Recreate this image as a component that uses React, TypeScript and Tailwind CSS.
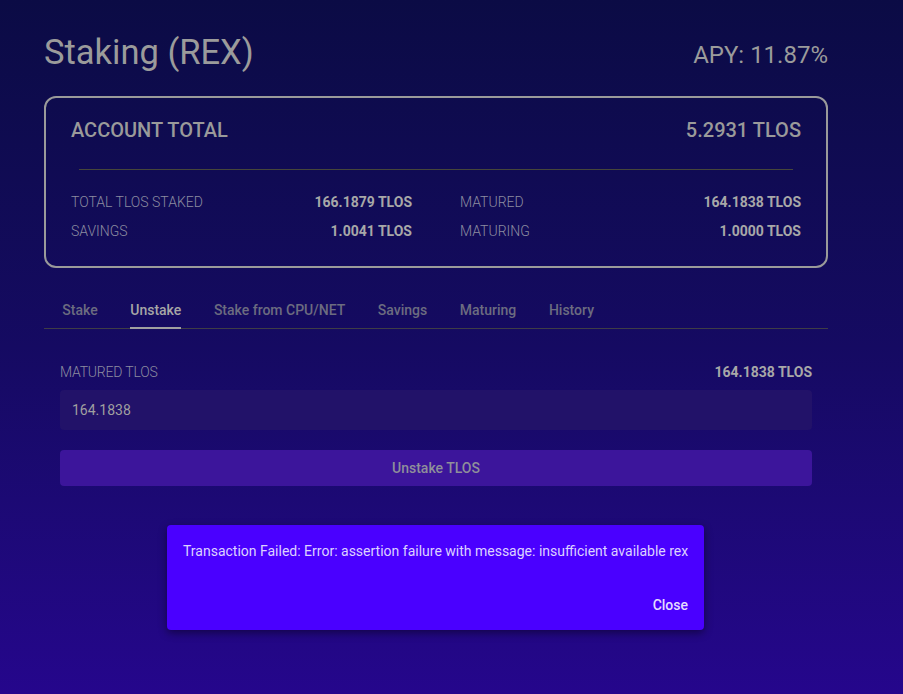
import { useState } from 'react';

const tabs = ['Stake', 'Unstake', 'Stake from CPU/NET', 'Savings', 'Maturing', 'History'];

export default function App() {
  const [active, setActive] = useState('Unstake');
  const [amount, setAmount] = useState('164.1838');
  const [open, setOpen] = useState(true);

  return (
    <div
      className="min-h-[694px] w-full bg-gradient-to-b from-[#0b0b45] via-[#150a62] to-[#25068c] font-['Roboto',sans-serif] text-[#9c9c9c]"
    >
      <div className="w-[784px] ml-[44px] pt-[30px]">
        {/* header */}
        <div className="flex items-center justify-between h-[44px]">
          <h1 className="text-[34.5px] leading-none font-normal text-[#9b9b9b]">Staking (REX)</h1>
          <div className="text-[24px] leading-none text-[#9b9b9b] mt-[6px]">APY: 11.87%</div>
        </div>

        {/* account card */}
        <div className="mt-[22px] h-[172px] rounded-xl border-2 border-[#9a9a9a] px-[25px] pt-[19px]">
          <div className="flex items-center justify-between h-[26px]">
            <div className="text-[20px] font-medium text-[#9a9a9a]">ACCOUNT TOTAL</div>
            <div className="text-[20px] font-medium text-[#9a9a9a]">5.2931 TLOS</div>
          </div>
          <div className="mx-[8px] mt-[26px] h-px bg-[#46463a]" />
          <div className="grid grid-cols-2 gap-x-[48px] mt-[24px] text-[14px]">
            <div className="flex flex-col gap-[13px]">
              <div className="flex justify-between h-[16px] items-center">
                <span className="font-light text-[#8c8ca0]">TOTAL TLOS STAKED</span>
                <span className="font-bold text-[#a8a8a8]">166.1879 TLOS</span>
              </div>
              <div className="flex justify-between h-[16px] items-center">
                <span className="font-light text-[#8c8ca0]">SAVINGS</span>
                <span className="font-bold text-[#a8a8a8]">1.0041 TLOS</span>
              </div>
            </div>
            <div className="flex flex-col gap-[13px]">
              <div className="flex justify-between h-[16px] items-center">
                <span className="font-light text-[#8c8ca0]">MATURED</span>
                <span className="font-bold text-[#a8a8a8]">164.1838 TLOS</span>
              </div>
              <div className="flex justify-between h-[16px] items-center">
                <span className="font-light text-[#8c8ca0]">MATURING</span>
                <span className="font-bold text-[#a8a8a8]">1.0000 TLOS</span>
              </div>
            </div>
          </div>
        </div>

        {/* tabs */}
        <div className="mt-[25px] flex border-b border-[#3f3d46] pl-[2px]">
          {tabs.map((t) => (
            <button
              key={t}
              onClick={() => setActive(t)}
              className={`px-[16.3px] h-[35px] text-[14px] font-medium flex items-stretch ${
                active === t ? 'text-[#a6a6a6]' : 'text-[#6c6c80]'
              }`}
            >
              <span
                className={`flex items-center border-b-2 -mb-px pt-[1px] ${
                  active === t ? 'border-[#a0a0a0]' : 'border-transparent'
                }`}
              >
                {t}
              </span>
            </button>
          ))}
        </div>

        {/* form */}
        <div className="px-[16px] pt-[35px]">
          <div className="flex items-center justify-between h-[16px] text-[14px]">
            <span className="font-light text-[#8c8ca0] tracking-[-0.2px]">MATURED TLOS</span>
            <span className="font-bold text-[#a8a8a8]">164.1838 TLOS</span>
          </div>
          <input
            value={amount}
            onChange={(e) => setAmount(e.target.value)}
            className="mt-[10px] w-full h-[40px] rounded bg-[#221269] px-[12px] text-[14px] text-[#a0a0a0] outline-none"
          />
          <button className="mt-[20px] w-full h-[36px] rounded bg-[#3c159b] text-[14px] font-medium text-[#8f8f9a]">
            Unstake TLOS
          </button>
        </div>

        {/* snackbar */}
        {open && (
          <div className="mt-[39px] ml-[123px] w-[537px] h-[105px] rounded bg-[#4a00ff] shadow-[0_3px_8px_rgba(0,0,0,0.45)] pl-[16px] pr-[15px] pt-[18px] flex flex-col">
            <div className="text-[14px] text-[#ddd2ff] leading-[16px] whitespace-nowrap">
              Transaction Failed: Error: assertion failure with message: insufficient available rex
            </div>
            <div className="flex justify-end mt-auto pb-[14px] pr-px">
              <button onClick={() => setOpen(false)} className="text-[14px] font-medium text-[#e4dcff]">
                Close
              </button>
            </div>
          </div>
        )}
      </div>
    </div>
  );
}
